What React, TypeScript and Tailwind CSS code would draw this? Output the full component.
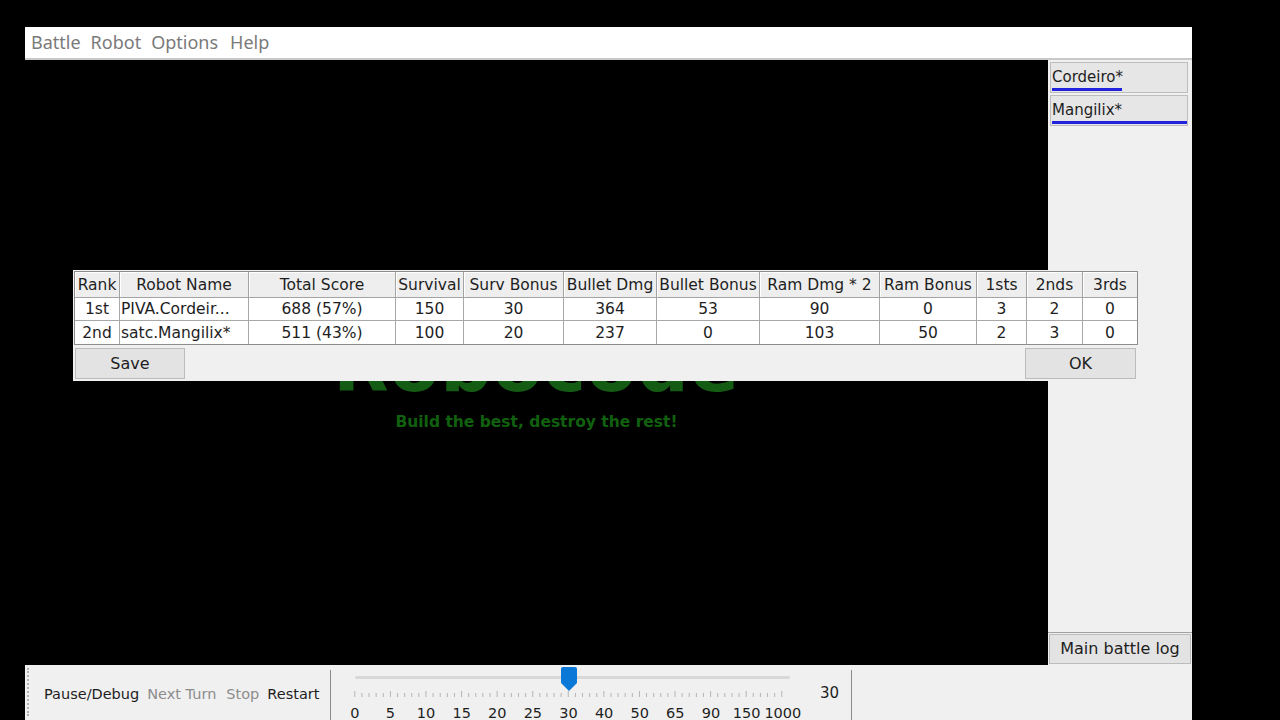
import React from "react";

const tahoma = { fontFamily: '"DejaVu Sans", "Noto Sans", sans-serif' };

const columns = [
	{ label: "Rank", w: 45 },
	{ label: "Robot Name", w: 129 },
	{ label: "Total Score", w: 147 },
	{ label: "Survival", w: 68 },
	{ label: "Surv Bonus", w: 100 },
	{ label: "Bullet Dmg", w: 93 },
	{ label: "Bullet Bonus", w: 103 },
	{ label: "Ram Dmg * 2", w: 120 },
	{ label: "Ram Bonus", w: 97 },
	{ label: "1sts", w: 50 },
	{ label: "2nds", w: 56 },
	{ label: "3rds", w: 54 },
];

const results = [
	["1st", "PIVA.Cordeir...", "688 (57%)", "150", "30", "364", "53", "90", "0", "3", "2", "0"],
	["2nd", "satc.Mangilix*", "511 (43%)", "100", "20", "237", "0", "103", "50", "2", "3", "0"],
];

const speedLabels = ["0", "5", "10", "15", "20", "25", "30", "40", "50", "65", "90", "150", "1000"];

const robots = [
	{ name: "Cordeiro*", energy: 52 },
	{ name: "Mangilix*", energy: 100 },
];

function ResultsDialog() {
	return (
		<div className="absolute left-[48px] top-[243px] w-[1065px] h-[111px] bg-[#f0f0f0] pt-[1px] pl-px" style={tahoma}>
			<div className="border border-[#8c8c8c] w-[1064px]">
				<div className="flex h-[26px] border-b border-[#a3a3a3]">
					{columns.map((c) => (
						<div
							key={c.label}
							className="flex items-center justify-center bg-[#eeeeee] border-r border-[#a3a3a3] last:border-r-0 shadow-[inset_1px_1px_0_#ffffff] text-[15.5px] leading-[20px] text-[#1e1e1e] whitespace-nowrap overflow-hidden"
							style={{ width: c.w }}
						>
							{c.label}
						</div>
					))}
				</div>
				{results.map((row, ri) => (
					<div key={ri} className="flex h-[23px] border-b border-[#a8a8a8] last:border-b-0">
						{row.map((cell, ci) => (
							<div
								key={ci}
								className={
									ci === 1
										? "flex items-center justify-start pl-[1px] bg-white border-r border-[#a8a8a8] last:border-r-0 text-[15.5px] leading-[20px] text-[#1e1e1e] whitespace-nowrap overflow-hidden"
										: "flex items-center justify-center bg-white border-r border-[#a8a8a8] last:border-r-0 text-[15.5px] leading-[20px] text-[#1e1e1e] whitespace-nowrap overflow-hidden"
								}
								style={{ width: columns[ci].w }}
							>
								{cell}
							</div>
						))}
					</div>
				))}
			</div>
			<div className="flex justify-between mt-[3px] pl-[1px] pr-[2px]">
				<button className="w-[110px] h-[31px] bg-[#e3e3e3] border border-[#bcbcbc] text-[16px] text-[#1e1e1e]">Save</button>
				<button className="w-[111px] h-[31px] bg-[#e3e3e3] border border-[#bcbcbc] text-[16px] text-[#1e1e1e]">OK</button>
			</div>
		</div>
	);
}

function SpeedSlider() {
	const ticks = Array.from({ length: 61 }, (_, i) => i);
	return (
		<div className="relative w-[463px] h-full">
			{/* track */}
			<div className="absolute left-[18px] top-[11px] w-[435px] h-[3px] bg-[#d8d8d8] rounded-sm" />
			{/* thumb */}
			<svg className="absolute left-[223px] top-[2px]" width="18" height="25" viewBox="0 0 18 25">
				<path d="M1 2 Q1 0 3 0 L15 0 Q17 0 17 2 L17 16 L9 24 L1 16 Z" fill="#0a78d7" />
			</svg>
			<svg className="absolute left-0 top-[25px]" width="463" height="10">
				{ticks.map((i) => {
					const x = 17.8 + i * 7.116;
					const major = i % 5 === 0;
					return (
						<line
							key={i}
							x1={x}
							x2={x}
							y1={major ? 1 : 3}
							y2={7}
							stroke="#b4b4b4"
							strokeWidth="1"
						/>
					);
				})}
			</svg>
			<div className="absolute left-0 top-[38px] w-[463px] grid grid-cols-13 text-[14.5px] leading-[20px] text-[#1e1e1e]">
				{speedLabels.map((l) => (
					<span key={l} className="text-center whitespace-nowrap">
						{l}
					</span>
				))}
			</div>
		</div>
	);
}

export default function App() {
	return (
		<div className="w-full h-[720px] bg-black overflow-hidden pt-[27px] pl-[25px]">
			<div className="relative w-[1167px] flex flex-col">
				{/* menu bar */}
				<div
					className="h-[33px] bg-white border-b-2 border-[#c8c8c8] flex items-center gap-[10px] pl-[6px] text-[18px] text-[#7a7a7a]"
					style={{ fontFamily: '"Noto Sans", "Open Sans", sans-serif' }}
				>
					<span>Battle</span>
					<span>Robot</span>
					<span>Options</span>
					<span className="ml-[2px]">Help</span>
				</div>

				<div className="flex h-[605px]">
					{/* battle field */}
					<div className="w-[1023px] bg-black flex flex-col items-center pt-[270px]">
						<div
							className="text-[72px] leading-none font-bold text-[#145c14] tracking-[1px]"
							style={{ fontFamily: '"DejaVu Sans", sans-serif' }}
						>
							Robocode
						</div>
						<div
							className="mt-[10px] text-[15.5px] leading-[20px] font-bold text-[#11600f]"
							style={{ fontFamily: '"DejaVu Sans", sans-serif' }}
						>
							Build the best, destroy the rest!
						</div>
					</div>

					{/* robot buttons */}
					<div className="w-[144px] bg-[#f0f0f0] flex flex-col" style={tahoma}>
						<div className="flex flex-col gap-[2px] pt-[2px] pl-[2px]">
							{robots.map((r) => (
								<div
									key={r.name}
									className="w-[138px] h-[31px] bg-[#e6e6e6] border border-[#bdbdbd] flex flex-col pl-[1px] pt-[5px]"
								>
									<span className="text-[15px] leading-[19px] text-[#1e1e1e]">{r.name}</span>
									<div className="h-[3px] mt-[1px] bg-[#2222dd]" style={{ width: `${r.energy}%` }} />
								</div>
							))}
						</div>
						<div className="mt-auto border-t border-[#a0a0a0] pt-[1px] pl-px pb-px">
							<button className="w-[142px] h-[30px] bg-[#e3e3e3] border border-[#bcbcbc] text-[16px] text-[#1e1e1e]">
								Main battle log
							</button>
						</div>
					</div>
				</div>

				{/* control bar */}
				<div className="h-[55px] bg-[#f0f0f0] flex items-stretch" style={tahoma}>
					<div className="w-[305px] flex">
						<div className="ml-[2px] mt-[3px] mb-[4px] w-[3px] border-l-2 border-dotted border-[#b0b0b0]" />
						<div className="flex items-center gap-[8px] pl-[14px] pt-[4px] text-[14.5px] whitespace-nowrap">
							<span className="text-[#1e1e1e]">Pause/Debug</span>
							<span className="text-[#8c8c8c]">Next Turn</span>
							<span className="text-[#8c8c8c] ml-[2px]">Stop</span>
							<span className="text-[#1e1e1e]">Restart</span>
						</div>
					</div>
					<div className="mt-[5px] w-px bg-[#8a8a8a]" />
					<div className="ml-[6px]">
						<SpeedSlider />
					</div>
					<div className="w-[51px] flex items-center pl-[20px] pt-[2px] text-[15px] text-[#1e1e1e]">30</div>
					<div className="mt-[5px] w-px bg-[#8a8a8a]" />
				</div>

				<ResultsDialog />
			</div>
		</div>
	);
}
